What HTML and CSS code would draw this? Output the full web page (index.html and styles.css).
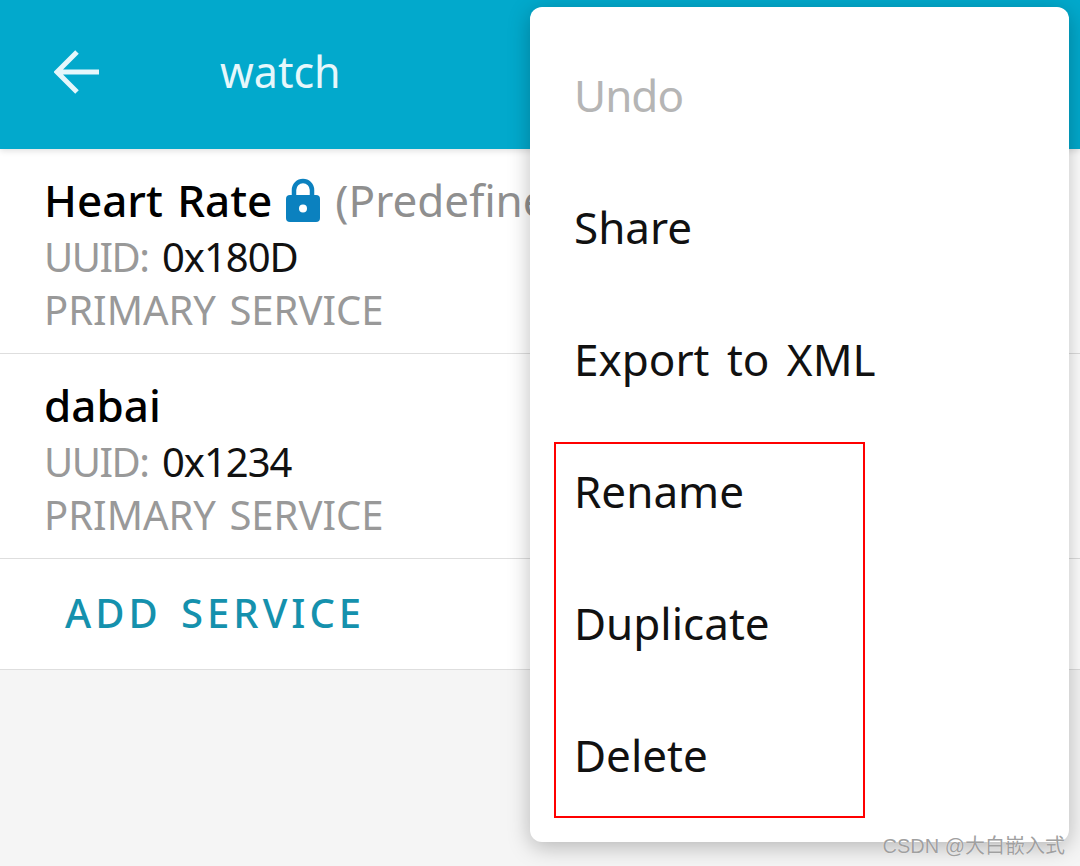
FILE: index.html
```html
<!DOCTYPE html>
<html>

<head>
    <title>watch</title>
    <link rel="stylesheet" href="styles.css">
</head>

<body>
    <div class="screen">
        <div class="topbar">
            <svg class="back" width="46" height="44" viewBox="0 0 46 44">
                <path d="M45 22H4M23 2 3 22l20 20"/>
            </svg>
            <span class="title">watch</span>
        </div>

        <div class="service">
            <div class="name">
                <span>Heart Rate</span>
                <svg class="lock" width="36" height="46" viewBox="0 0 36 46">
                    <path d="M9 19v-7a9 9 0 0 1 18 0v7" class="shackle"/>
                    <rect x="1" y="17" width="34" height="27" rx="4" class="body"/>
                    <circle cx="18" cy="30.500" r="4" class="hole"/>
                </svg>
                <span class="predefined">(Predefined)</span>
            </div>
            <div class="uuid"><span class="label">UUID:</span> <span class="value">0x180D</span></div>
            <div class="type">PRIMARY SERVICE</div>
        </div>
        <div class="service">
            <div class="name">dabai</div>
            <div class="uuid"><span class="label">UUID:</span> <span class="value">0x1234</span></div>
            <div class="type">PRIMARY SERVICE</div>
        </div>
        <div class="add">ADD SERVICE</div>

        <div class="menu">
            <div class="item disabled">Undo</div>
            <div class="item">Share</div>
            <div class="item">Export to XML</div>
            <div class="item">Rename</div>
            <div class="item">Duplicate</div>
            <div class="item">Delete</div>
        </div>
        <div class="redbox"></div>
        <div class="watermark">CSDN @大白嵌入式</div>
    </div>
</body>

</html>
```

FILE: styles.css
```css
body {
    margin: 0;
    background-color: #f5f5f5;
    font-family: "Noto Sans", "Noto Sans CJK SC", sans-serif;
}

.screen {
    position: relative;
    width: 1080px;
    height: 866px;
    overflow: hidden;
}

.topbar {
    position: relative;
    display: flex;
    align-items: center;
    height: 149px;
    padding: 0 0 6px 54px;
    background-color: #02a9cc;
    color: #e6f7fb;
    box-sizing: border-box;
    box-shadow: 0 2px 6px rgba(0, 0, 0, 0.12);
}

.back {
    fill: none;
    stroke: #e6f7fb;
    stroke-width: 5;
}

.title {
    margin-left: 120px;
    font-size: 43px;
}

.service {
    height: 205px;
    padding: 25px 0 0 44px;
    box-sizing: border-box;
    background-color: #fff;
    border-bottom: 1px solid #dedede;
    white-space: nowrap;
    overflow: hidden;
    line-height: 53px;
    font-size: 40px;
    color: #111;
}

.name {
    display: flex;
    align-items: center;
    font-size: 44px;
    font-weight: 500;
    word-spacing: 3px;
    color: #000;
}

.lock {
    margin: 0 14px 0 13px;
}

.shackle {
    fill: none;
    stroke: #0b81bf;
    stroke-width: 4.500;
}

.body {
    fill: #0b81bf;
}

.hole {
    fill: #fff;
}

.predefined {
    font-weight: 400;
    color: #8f8f8f;
}

.uuid {
    margin-top: 3px;
}

.label {
    letter-spacing: -1.500px;
    color: #999;
}

.value {
    margin-left: 3px;
    letter-spacing: -1px;
}

.type {
    color: #999;
    word-spacing: 3px;
}

.add {
    height: 111px;
    line-height: 108px;
    padding-left: 65px;
    box-sizing: border-box;
    background-color: #fff;
    border-bottom: 1px solid #dedede;
    color: #1591ad;
    font-size: 40px;
    font-weight: 500;
    letter-spacing: 4px;
    word-spacing: 5px;
}

.menu {
    position: absolute;
    left: 530px;
    top: 7px;
    width: 539px;
    height: 835px;
    padding-top: 22px;
    box-sizing: border-box;
    background-color: #fff;
    border-radius: 12px;
    box-shadow: 0 5px 22px rgba(0, 0, 0, 0.26);
}

.item {
    height: 132px;
    line-height: 132px;
    padding-left: 44px;
    font-size: 44px;
    word-spacing: 6px;
    color: #111;
}

.item.disabled {
    letter-spacing: -1px;
    color: #b5b5b5;
}

.redbox {
    position: absolute;
    left: 554px;
    top: 442px;
    width: 307px;
    height: 372px;
    border: 2px solid #f00;
}

.watermark {
    position: absolute;
    right: 15px;
    top: 830px;
    font-family: "Liberation Sans", "Noto Sans CJK SC", sans-serif;
    font-size: 20px;
    color: #a0a0a0;
    text-shadow: 0 0 1px #fff;
}
```
